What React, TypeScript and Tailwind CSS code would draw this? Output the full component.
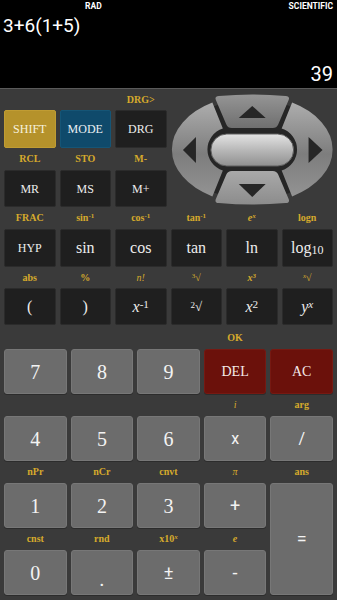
import React from 'react';

const SERIF = "font-['Liberation_Serif','DejaVu_Serif',serif]";
const SANS = "font-['Roboto','Liberation_Sans',sans-serif]";

type Tone = 'dark' | 'shift' | 'mode' | 'num' | 'red';

const TONES: Record<Tone, string> = {
  dark: 'bg-[#1f1f1f] border border-[#2b2b2b] text-[#ededed] rounded-[2px]',
  shift: 'bg-[#b5922b] border border-[#c09c33] text-[#f6f1de] rounded-[2px]',
  mode: 'bg-[#0f4a6b] border border-[#155576] text-[#e9eff3] rounded-[2px]',
  num: 'bg-[#6c6c6c] border border-[#777777] text-[#f3f3f3] rounded-[3px] shadow-[0_1px_0_#2c2c2c]',
  red: 'bg-[#6b110b] border border-[#761912] text-[#f3e9e8] rounded-[3px] shadow-[0_1px_0_#2c2c2c]',
};

function Key({ tone = 'dark', className = '', children }: { tone?: Tone; className?: string; children: React.ReactNode }) {
  return (
    <div className={`flex items-center justify-center leading-none ${TONES[tone]} ${className}`}>
      {children}
    </div>
  );
}

function Label({ children, className = '' }: { children?: React.ReactNode; className?: string }) {
  return (
    <div className={`flex items-center justify-center text-[10px] font-bold leading-none text-[#d6aa2c] ${className}`}>
      {children}
    </div>
  );
}

const Sup = ({ children }: { children: React.ReactNode }) => (
  <sup className="relative -top-[0.15em] text-[0.7em] leading-none">{children}</sup>
);

function DPad() {
  return (
    <svg viewBox="170 89 163 118" className="w-full h-full" preserveAspectRatio="none">
      <defs>
        <linearGradient id="gUp" x1="0" y1="0" x2="0" y2="1">
          <stop offset="0" stopColor="#959595" />
          <stop offset="1" stopColor="#6f6f6f" />
        </linearGradient>
        <linearGradient id="gSide" x1="0" y1="0" x2="0" y2="1">
          <stop offset="0" stopColor="#adadad" />
          <stop offset="0.55" stopColor="#7d7d7d" />
          <stop offset="1" stopColor="#939393" />
        </linearGradient>
        <linearGradient id="gDown" x1="0" y1="0" x2="0" y2="1">
          <stop offset="0" stopColor="#a9a9a9" />
          <stop offset="1" stopColor="#8c8c8c" />
        </linearGradient>
        <linearGradient id="gPill" x1="0" y1="0" x2="0" y2="1">
          <stop offset="0" stopColor="#e4e4e4" />
          <stop offset="0.5" stopColor="#b8b8b8" />
          <stop offset="1" stopColor="#8f8f8f" />
        </linearGradient>
      </defs>
      {/* dark base visible in the gaps */}
      <ellipse cx="251.5" cy="149.5" rx="76" ry="50" fill="#262626" />
      {/* left / right */}
      <path d="M 211.5 102.6 L 222 128.5 A 22 22 0 0 0 222 170.5 L 211.5 196.4 A 80.5 54 0 0 1 211.5 102.6 Z" fill="url(#gSide)" />
      <path d="M 291.5 102.6 L 281 128.5 A 22 22 0 0 1 281 170.5 L 291.5 196.4 A 80.5 54 0 0 0 291.5 102.6 Z" fill="url(#gSide)" />
      {/* up / down */}
      <path d="M 218 96 Q 251.5 93 285 96 Q 289.5 96.3 288 100 L 277.5 124.5 Q 276 128 272 128 L 231 128 Q 227 128 225.5 124.5 L 215 100 Q 213.5 96.3 218 96 Z" fill="url(#gUp)" />
      <path d="M 218 203 Q 251.5 206 285 203 Q 289.5 202.7 288 199 L 277.5 174.5 Q 276 171 272 171 L 231 171 Q 227 171 225.5 174.5 L 215 199 Q 213.5 202.7 218 203 Z" fill="url(#gDown)" />
      {/* centre pill */}
      <rect x="210" y="134" width="83" height="32" rx="16" fill="url(#gPill)" stroke="#5e5e5e" strokeWidth="1" />
      {/* arrows */}
      <polygon points="238,118 265,118 251.5,106" fill="#262626" />
      <polygon points="238,184 265,184 251.5,197" fill="#262626" />
      <polygon points="195,137 195,163 182,150" fill="#262626" />
      <polygon points="308,137 308,163 322,150" fill="#262626" />
    </svg>
  );
}

export default function App() {
  return (
    <div className={`w-[337px] min-h-[600px] bg-[#3a3a3a] ${SERIF}`}>
      {/* Display */}
      <div className={`h-[88px] bg-black text-white flex flex-col ${SANS}`}>
        <div className="flex items-start pt-[2px] pr-[4px] text-[8.5px] font-bold leading-none">
          <span className="ml-[85px]">RAD</span>
          <span className="ml-auto">SCIENTIFIC</span>
        </div>
        <div className="pl-[3px] mt-[4px] text-[19px] leading-[22px]">3+6(1+5)</div>
        <div className="mt-auto pr-[4px] pb-[3px] text-right text-[20px] leading-[22px]">39</div>
      </div>
      <div className="h-px bg-[#5a5a5a]" />

      {/* Scientific keys */}
      <div className="grid grid-cols-6 gap-x-[4px] px-[4px] grid-rows-[21px_38px_22px_37px_22px_38px_21px_37px]">
        <div className="col-start-4 col-span-3 row-start-1 row-span-4">
          <DPad />
        </div>

        <Label />
        <Label />
        <Label>DRG&gt;</Label>
        <Key tone="shift" className="text-[12px]">SHIFT</Key>
        <Key tone="mode" className="text-[12px]">MODE</Key>
        <Key className="text-[12px]">DRG</Key>
        <Label>RCL</Label>
        <Label>STO</Label>
        <Label>M-</Label>
        <Key className="text-[12px]">MR</Key>
        <Key className="text-[12px]">MS</Key>
        <Key className="text-[12px]">M+</Key>

        <Label>FRAC</Label>
        <Label>sin<Sup>-1</Sup></Label>
        <Label>cos<Sup>-1</Sup></Label>
        <Label>tan<Sup>-1</Sup></Label>
        <Label className="italic">e<Sup>x</Sup></Label>
        <Label>logn</Label>
        <Key className="text-[12px]">HYP</Key>
        <Key className="text-[16px]">sin</Key>
        <Key className="text-[16px]">cos</Key>
        <Key className="text-[16px]">tan</Key>
        <Key className="text-[16px]">ln</Key>
        <Key className="text-[16px]">log<sub className="relative top-[0.2em] text-[0.75em] leading-none">10</sub></Key>

        <Label>abs</Label>
        <Label>%</Label>
        <Label className="italic font-normal">n!</Label>
        <Label className="font-normal"><Sup>3</Sup>√</Label>
        <Label className="italic">x<Sup>3</Sup></Label>
        <Label className="font-normal italic"><Sup>x</Sup>√</Label>
        <Key className="text-[16px]">(</Key>
        <Key className="text-[16px]">)</Key>
        <Key className="text-[16px]"><i>x</i><Sup>-1</Sup></Key>
        <Key className="text-[13px]"><Sup>2</Sup>√</Key>
        <Key className="text-[16px]"><i>x</i><Sup>2</Sup></Key>
        <Key className="text-[16px]"><i>y</i><Sup><i>x</i></Sup></Key>
      </div>

      {/* Number keys */}
      <div className="mt-[2px] grid grid-cols-5 gap-x-[4px] px-[4px] grid-rows-[22px_45px_22px_45px_22px_45px_22px_45px]">
        <Key tone="num" className={`col-start-5 row-start-6 row-span-3 text-[18px] ${SANS}`}>=</Key>

        <Label />
        <Label />
        <Label />
        <Label>OK</Label>
        <Label />
        <Key tone="num" className="text-[20px]">7</Key>
        <Key tone="num" className="text-[20px]">8</Key>
        <Key tone="num" className="text-[20px]">9</Key>
        <Key tone="red" className="text-[14px]">DEL</Key>
        <Key tone="red" className="text-[14px]">AC</Key>

        <Label />
        <Label />
        <Label />
        <Label className="italic font-normal">i</Label>
        <Label>arg</Label>
        <Key tone="num" className="text-[20px]">4</Key>
        <Key tone="num" className="text-[20px]">5</Key>
        <Key tone="num" className="text-[20px]">6</Key>
        <Key tone="num" className={`text-[16px] ${SANS}`}>x</Key>
        <Key tone="num" className={`text-[16px] ${SANS}`}>/</Key>

        <Label>nPr</Label>
        <Label>nCr</Label>
        <Label>cnvt</Label>
        <Label className="italic font-normal">π</Label>
        <Label>ans</Label>
        <Key tone="num" className="text-[20px]">1</Key>
        <Key tone="num" className="text-[20px]">2</Key>
        <Key tone="num" className="text-[20px]">3</Key>
        <Key tone="num" className={`text-[18px] ${SANS}`}>+</Key>

        <Label>cnst</Label>
        <Label>rnd</Label>
        <Label>x10<Sup><i>x</i></Sup></Label>
        <Label className="italic">e</Label>
        <Key tone="num" className="text-[20px]">0</Key>
        <Key tone="num" className={`text-[20px] ${SANS}`}>
          <span className="mt-[12px]">.</span>
        </Key>
        <Key tone="num" className={`text-[18px] ${SANS}`}>±</Key>
        <Key tone="num" className={`text-[18px] ${SANS}`}>-</Key>
      </div>
    </div>
  );
}
